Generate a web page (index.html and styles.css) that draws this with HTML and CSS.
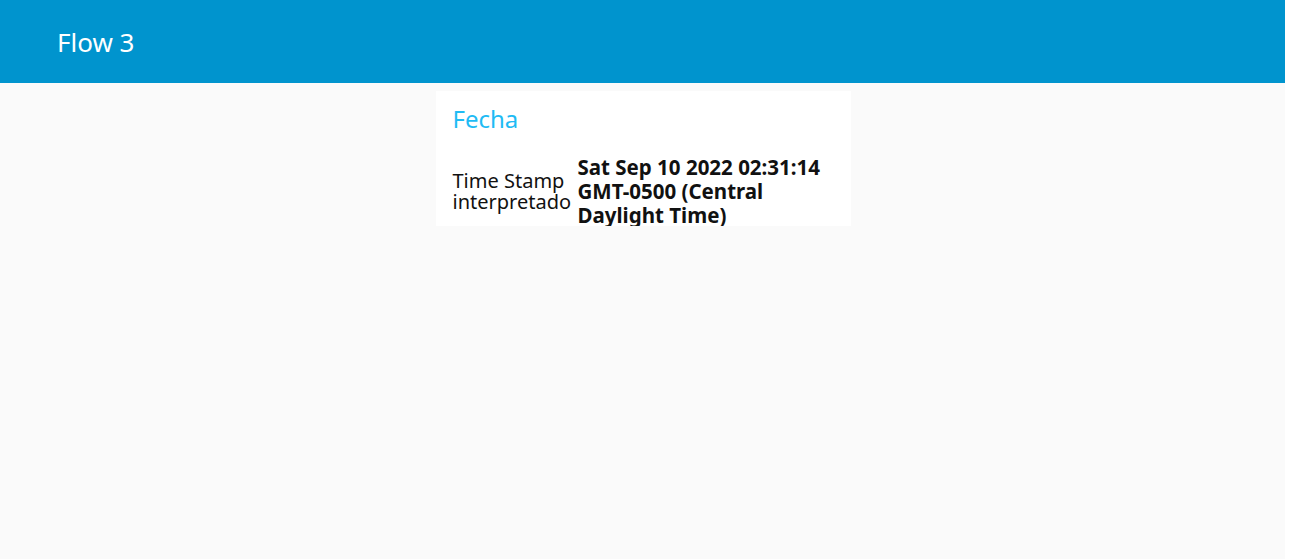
FILE: index.html
```html
<!DOCTYPE html>
<html lang="es">
<head>
  <meta charset="UTF-8">
  <meta name="viewport" content="width=device-width, initial-scale=1.0">
  <title>Flow 3</title>
  <link rel="stylesheet" href="styles.css">
</head>
<body>
  <div class="app">
    <div class="toolbar">Flow 3</div>

    <div class="content">
      <div class="group">
        <div class="group-title">Fecha</div>
        <div class="text-row">
          <div class="label">Time Stamp interpretado</div>
          <div class="value">Sat Sep 10 2022 02:31:14 GMT-0500 (Central Daylight Time)</div>
        </div>
      </div>
    </div>
  </div>
</body>
</html>
```

FILE: styles.css
```css
html, body {
  margin: 0;
  padding: 0;
  background: #fff;
}
body {
  font-family: "Noto Sans", "Open Sans", sans-serif;
  color: #111;
}
.app {
  width: 1285px;
  height: 559px;
  background: #fafafa;
  display: flex;
  flex-direction: column;
}
.toolbar {
  height: 83px;
  flex-shrink: 0;
  background: #0094ce;
  color: #fff;
  font-size: 26px;
  display: flex;
  align-items: center;
  padding-left: 57px;
}
.content {
  display: flex;
  justify-content: center;
  padding-top: 8px;
  padding-left: 1px;
}
.group {
  width: 415px;
  height: 135px;
  box-sizing: border-box;
  padding: 0 17px;
  background: #fff;
  overflow: hidden;
}
.group-title {
  color: #1fbbf4;
  font-size: 24px;
  line-height: 30px;
  padding-top: 13px;
}
.text-row {
  display: flex;
  align-items: center;
  gap: 6px;
  margin-top: 21px;
}
.label {
  width: 119px;
  flex-shrink: 0;
  font-size: 20px;
  line-height: 21px;
}
.value {
  font-size: 20.5px;
  font-weight: bold;
  line-height: 24px;
}
```
